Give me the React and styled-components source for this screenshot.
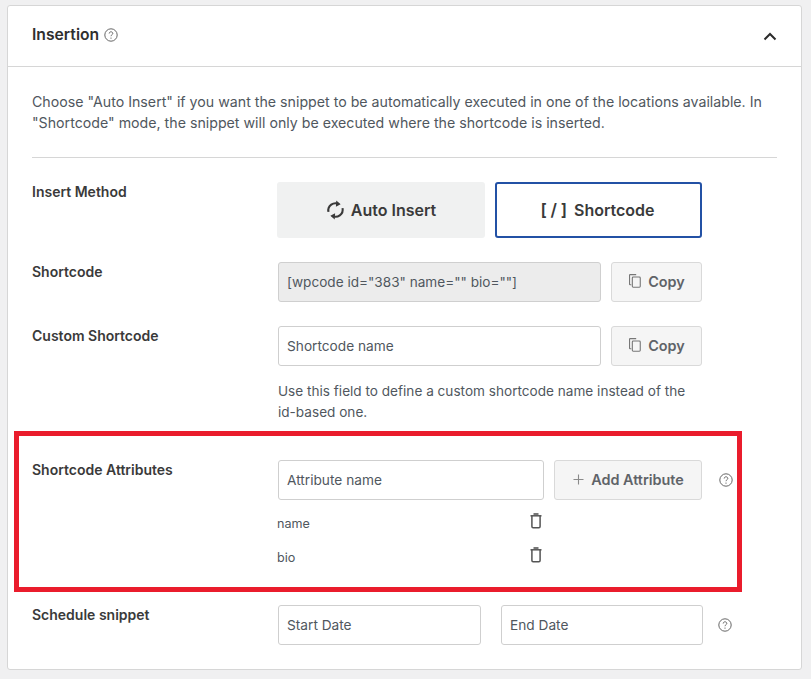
import React from 'react';
import styled, { createGlobalStyle } from 'styled-components';

const Global = createGlobalStyle`
  html, body { margin: 0; padding: 0; background: #f0f0f1; }
  body { font-family: Inter, "Liberation Sans", sans-serif; color: #3c434a; -webkit-font-smoothing: antialiased; }
  * { box-sizing: border-box; }
`;
const Page = styled.div`
  width: 811px; height: 679px; padding: 5px 9px 9px 7px; position: relative; overflow: hidden;
`;
const Card = styled.section`
  height: 665px; background: #fff; border: 1px solid #d6d6d6; border-radius: 3px;
`;
const Header = styled.header`
  height: 61px; padding: 0 24px; border-bottom: 1px solid #d6d6d6;
  display: flex; align-items: center; justify-content: space-between;
`;
const TitleWrap = styled.div`display: flex; align-items: center; gap: 5px; margin-top: -3px;`;
const Title = styled.h2`margin: 0; font-size: 15.7px; line-height: 20px; font-weight: 600; color: #2f2f2f;`;
const Chevron = styled.svg`width: 14px; height: 9px; color: #2b2b2b; margin-top: 1px;`;
const Body = styled.div`padding: 24px 24px 0;`;
const Intro = styled.p`
  margin: 0; font-size: 14.2px; line-height: 21px; color: #50575e; padding-bottom: 24px; border-bottom: 1px solid #d6d6d6;
`;
const Row = styled.div`display: flex; margin-top: ${p => p.$top}px;`;
const Label = styled.div`
  width: 246px; flex: none; font-size: 14px; line-height: 20px; font-weight: 600; color: #3a3a3a;
`;
const Field = styled.div`flex: 1; min-width: 0;`;
const Inline = styled.div`display: flex; align-items: center; gap: ${p => p.$gap || 10}px;`;
const MethodGroup = styled(Inline)`margin-left: -1px;`;
const Method = styled.div`
  height: 56px; width: ${p => p.$w}px; border-radius: 3px; display: flex; align-items: center; justify-content: center; gap: 6px;
  font-size: 16px; font-weight: 600; color: #3a3a3a;
  background: ${p => p.$active ? '#fff' : '#f0f1f1'};
  border: 2px solid ${p => p.$active ? '#2351a5' : '#f0f1f1'};
  padding-right: ${p => p.$active ? 2 : 0}px;
`;
const Slash = styled.span`font-size: 17px; letter-spacing: 3.8px; font-weight: 600; margin-right: -3px;`;
const Input = styled.div`
  height: 40px; width: ${p => p.$w}px; flex: none; border: 1px solid #cfcfcf; border-radius: 3px; padding: 0 8px;
  display: flex; align-items: center; font-size: ${p => p.$off ? 13.6 : 13.7}px; color: #50575e; background: ${p => p.$off ? '#ececec' : '#fff'};
`;
const Button = styled.div`
  height: 40px; width: ${p => p.$w}px; flex: none; border: 1px solid #d9d9d9; border-radius: 3px; background: #f5f5f5;
  display: flex; align-items: center; justify-content: center; gap: 7px; padding: 0 0 2px 1px;
  font-size: 14.4px; font-weight: 600; color: #5f6368;
`;
const Help = styled.p`margin: 15px 0 0; font-size: 13.6px; line-height: 21px; color: #50575e; width: 425px;`;
const HelpIcon = styled.svg`width: 14px; height: 14px; color: #666; flex: none; margin-left: ${p => p.$left || 0}px;`;
const Attr = styled.div`
  display: flex; align-items: center; justify-content: space-between; width: 265px; height: 34px; font-size: 12.6px; color: #50575e; margin-left: -1px;
`;
const AttrList = styled.div`margin-top: 6px;`;
const Trash = styled.svg`width: 12px; height: 16px; color: #555; margin-top: -5px;`;
const Highlight = styled.div`
  position: absolute; left: 14px; top: 431px; width: 728px; height: 161px; border: 5px solid #ea1c2c; pointer-events: none;
`;

const Q = ({ left }) => (
  <HelpIcon $left={left} viewBox="0 0 14 14" fill="none" stroke="currentColor">
    <circle cx="7" cy="7" r="6.2" strokeWidth="1" />
    <path d="M5.2 5.5c0-1 .8-1.7 1.8-1.7s1.8.7 1.8 1.6c0 1.3-1.8 1.4-1.8 2.8" strokeWidth="1" />
    <circle cx="7" cy="10.1" r=".7" fill="currentColor" stroke="none" />
  </HelpIcon>
);
const CopyIcon = () => (
  <svg width="12" height="14" viewBox="0 0 13 15" fill="none" stroke="#777" strokeWidth="1.2">
    <path d="M2.5 11.5H1.2a.6.6 0 0 1-.6-.6V1.2c0-.3.3-.6.6-.6h6.6" />
    <rect x="3.6" y="3.2" width="8.6" height="11" rx="1" />
  </svg>
);
const TrashIcon = () => (
  <Trash viewBox="0 0 12 16" fill="none" stroke="currentColor" strokeWidth="1.5">
    <path d="M0.5 2.8h11" />
    <path d="M3.5 1h5" strokeWidth="1.6" />
    <path d="M1.9 3v10.6c0 .7.5 1.2 1.2 1.2h5.8c.7 0 1.2-.5 1.2-1.2V3" />
  </Trash>
);
const SyncIcon = () => (
  <svg width="19" height="20" viewBox="0 0 20 20" fill="none" stroke="#3a3a3a" strokeWidth="2.2">
    <path d="M2.6 12A7.5 7.5 0 0 1 13.6 3.9" />
    <path d="M17.4 8A7.5 7.5 0 0 1 6.4 16.1" />
    <path d="M10.8 0l4.6 3.9-5 2.8z" fill="#3a3a3a" stroke="none" />
    <path d="M9.2 20l-4.6-3.9 5-2.8z" fill="#3a3a3a" stroke="none" />
  </svg>
);

export default function App() {
  return (
    <Page>
      <Global />
      <Card>
        <Header>
          <TitleWrap><Title>Insertion</Title><Q /></TitleWrap>
          <Chevron viewBox="0 0 14 9" fill="none" stroke="currentColor" strokeWidth="2"><path d="M1.5 7.5L7 2l5.5 5.5" /></Chevron>
        </Header>
        <Body>
          <Intro>Choose "Auto Insert" if you want the snippet to be automatically executed in one of the locations available. In "Shortcode" mode, the snippet will only be executed where the shortcode is inserted.</Intro>
          <Row $top={24}>
            <Label>Insert Method</Label>
            <MethodGroup>
              <Method $w={208}><SyncIcon />Auto Insert</Method>
              <Method $w={207} $active><Slash>[/]</Slash>Shortcode</Method>
            </MethodGroup>
          </Row>
          <Row $top={24}>
            <Label>Shortcode</Label>
            <Inline $gap={10}>
              <Input $w={323} $off>[wpcode id="383" name="" bio=""]</Input>
              <Button $w={91}><CopyIcon />Copy</Button>
            </Inline>
          </Row>
          <Row $top={24}>
            <Label>Custom Shortcode</Label>
            <Field>
              <Inline $gap={10}>
                <Input $w={323}>Shortcode name</Input>
                <Button $w={91}><CopyIcon />Copy</Button>
              </Inline>
              <Help>Use this field to define a custom shortcode name instead of the id-based one.</Help>
            </Field>
          </Row>
          <Row $top={37}>
            <Label>Shortcode Attributes</Label>
            <Field>
              <Inline $gap={10}>
                <Input $w={266}>Attribute name</Input>
                <Button $w={148}><svg width="11" height="11" viewBox="0 0 11 11" stroke="#8a8a8a" strokeWidth="1.1"><path d="M5.5 0.5v10M0.5 5.5h10" /></svg>Add Attribute</Button>
                <Q left={7} />
              </Inline>
              <AttrList>
                <Attr>name<TrashIcon /></Attr>
                <Attr>bio<TrashIcon /></Attr>
              </AttrList>
            </Field>
          </Row>
          <Row $top={31}>
            <Label>Schedule snippet</Label>
            <Inline $gap={20}>
              <Input $w={203}>Start Date</Input>
              <Input $w={202}>End Date</Input>
              <Q left={-5} />
            </Inline>
          </Row>
        </Body>
      </Card>
      <Highlight />
    </Page>
  );
}
